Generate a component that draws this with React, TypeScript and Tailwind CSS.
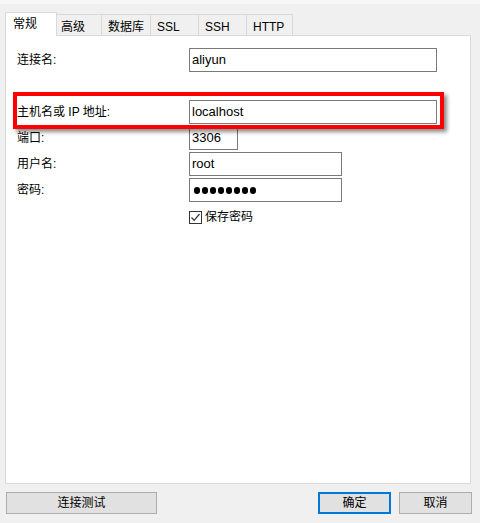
import React from "react";

const font = { fontFamily: '"Liberation Sans", "Noto Sans CJK SC", sans-serif' };

function Tab({ label, active, w, pl }: { label: string; active?: boolean; w: string; pl: string }) {
  if (active) {
    return (
      <div className={`relative z-10 -mb-px h-[24px] ${w} ${pl} border border-b-0 border-[#d9d9d9] bg-white pt-[3px] text-[12px] leading-[16px] text-black`}>
        {label}
      </div>
    );
  }
  return (
    <div className={`h-[21px] ${w} ${pl} border-t border-r border-[#d9d9d9] bg-[#f0f0f0] pt-[4px] text-[12px] leading-[16px] text-black`}>
      {label}
    </div>
  );
}

function Label({ children }: { children: React.ReactNode }) {
  return <div className="flex h-[24px] items-center text-[12px] leading-[16px] text-black">{children}</div>;
}

function Input({ w, children }: { w: string; children?: React.ReactNode }) {
  return (
    <div className={`flex h-[24px] ${w} items-center border border-[#7a7a7a] bg-white pl-[2px] text-[13px] leading-[16px] text-black`}>
      {children}
    </div>
  );
}

function Btn({ children, w, primary }: { children: React.ReactNode; w: string; primary?: boolean }) {
  return (
    <div
      className={`flex h-[22px] ${w} items-center justify-center bg-[#e1e1e1] text-[12px] leading-[16px] text-black ${
        primary ? "border-2 border-[#0078d7]" : "border border-[#adadad]"
      }`}
    >
      {children}
    </div>
  );
}

export default function App() {
  return (
    <div className="relative h-[523px] w-[480px] overflow-hidden bg-[#f0f0f0]" style={font}>
      <div className="h-[4px] bg-[#f7f7f7]" />
      <div className="mt-[8px] flex items-end pl-[5px]">
        <Tab label="常规" active w="w-[52px]" pl="pl-[7px]" />
        <Tab label="高级" w="w-[45px]" pl="pl-[4px]" />
        <Tab label="数据库" w="w-[49px]" pl="pl-[6px]" />
        <Tab label="SSL" w="w-[48px]" pl="pl-[6px]" />
        <Tab label="SSH" w="w-[48px]" pl="pl-[6px]" />
        <Tab label="HTTP" w="w-[46px]" pl="pl-[6px]" />
      </div>
      <div className="ml-[5px] h-[449px] w-[466px] border border-[#d9d9d9] bg-white pl-[11px] pt-[12px]">
        <div className="grid grid-cols-[172px_1fr]">
          <Label>连接名:</Label>
          <Input w="w-[248px]">aliyun</Input>
        </div>
        <div className="mt-[28px] grid grid-cols-[172px_1fr] gap-y-[2px]">
          <Label>主机名或 IP 地址:</Label>
          <Input w="w-[248px]">localhost</Input>
          <Label>端口:</Label>
          <Input w="w-[49px]">3306</Input>
          <Label>用户名:</Label>
          <Input w="w-[153px]">root</Input>
          <Label>密码:</Label>
          <Input w="w-[153px]">
            <div className="flex gap-[2px] pl-[2px]">
              {Array.from({ length: 8 }).map((_, i) => (
                <span key={i} className="block h-[7px] w-[6px] rounded-full bg-black" />
              ))}
            </div>
          </Input>
          <div />
          <div className="mt-[5px] flex items-center gap-[3px]">
            <div className="flex h-[13px] w-[13px] items-center justify-center border border-[#333333] bg-white">
              <svg width="11" height="11" viewBox="0 0 11 11">
                <path d="M1.5 5.5 L4.2 8.3 L9.5 2" fill="none" stroke="#333333" strokeWidth="1.2" />
              </svg>
            </div>
            <span className="text-[12px] leading-[16px] text-black">保存密码</span>
          </div>
        </div>
      </div>
      <div className="mt-[8px] flex items-center pl-[6px] pr-[8px]">
        <Btn w="w-[151px]">连接测试</Btn>
        <div className="ml-auto flex gap-[8px]">
          <Btn w="w-[73px]" primary>
            确定
          </Btn>
          <Btn w="w-[73px]">取消</Btn>
        </div>
      </div>
      <div className="pointer-events-none absolute left-[13px] top-[92px] h-[37px] w-[431px] border-[4px] border-[#ff0000] shadow-[3px_3px_4px_rgba(0,0,0,0.45)]" />
    </div>
  );
}
